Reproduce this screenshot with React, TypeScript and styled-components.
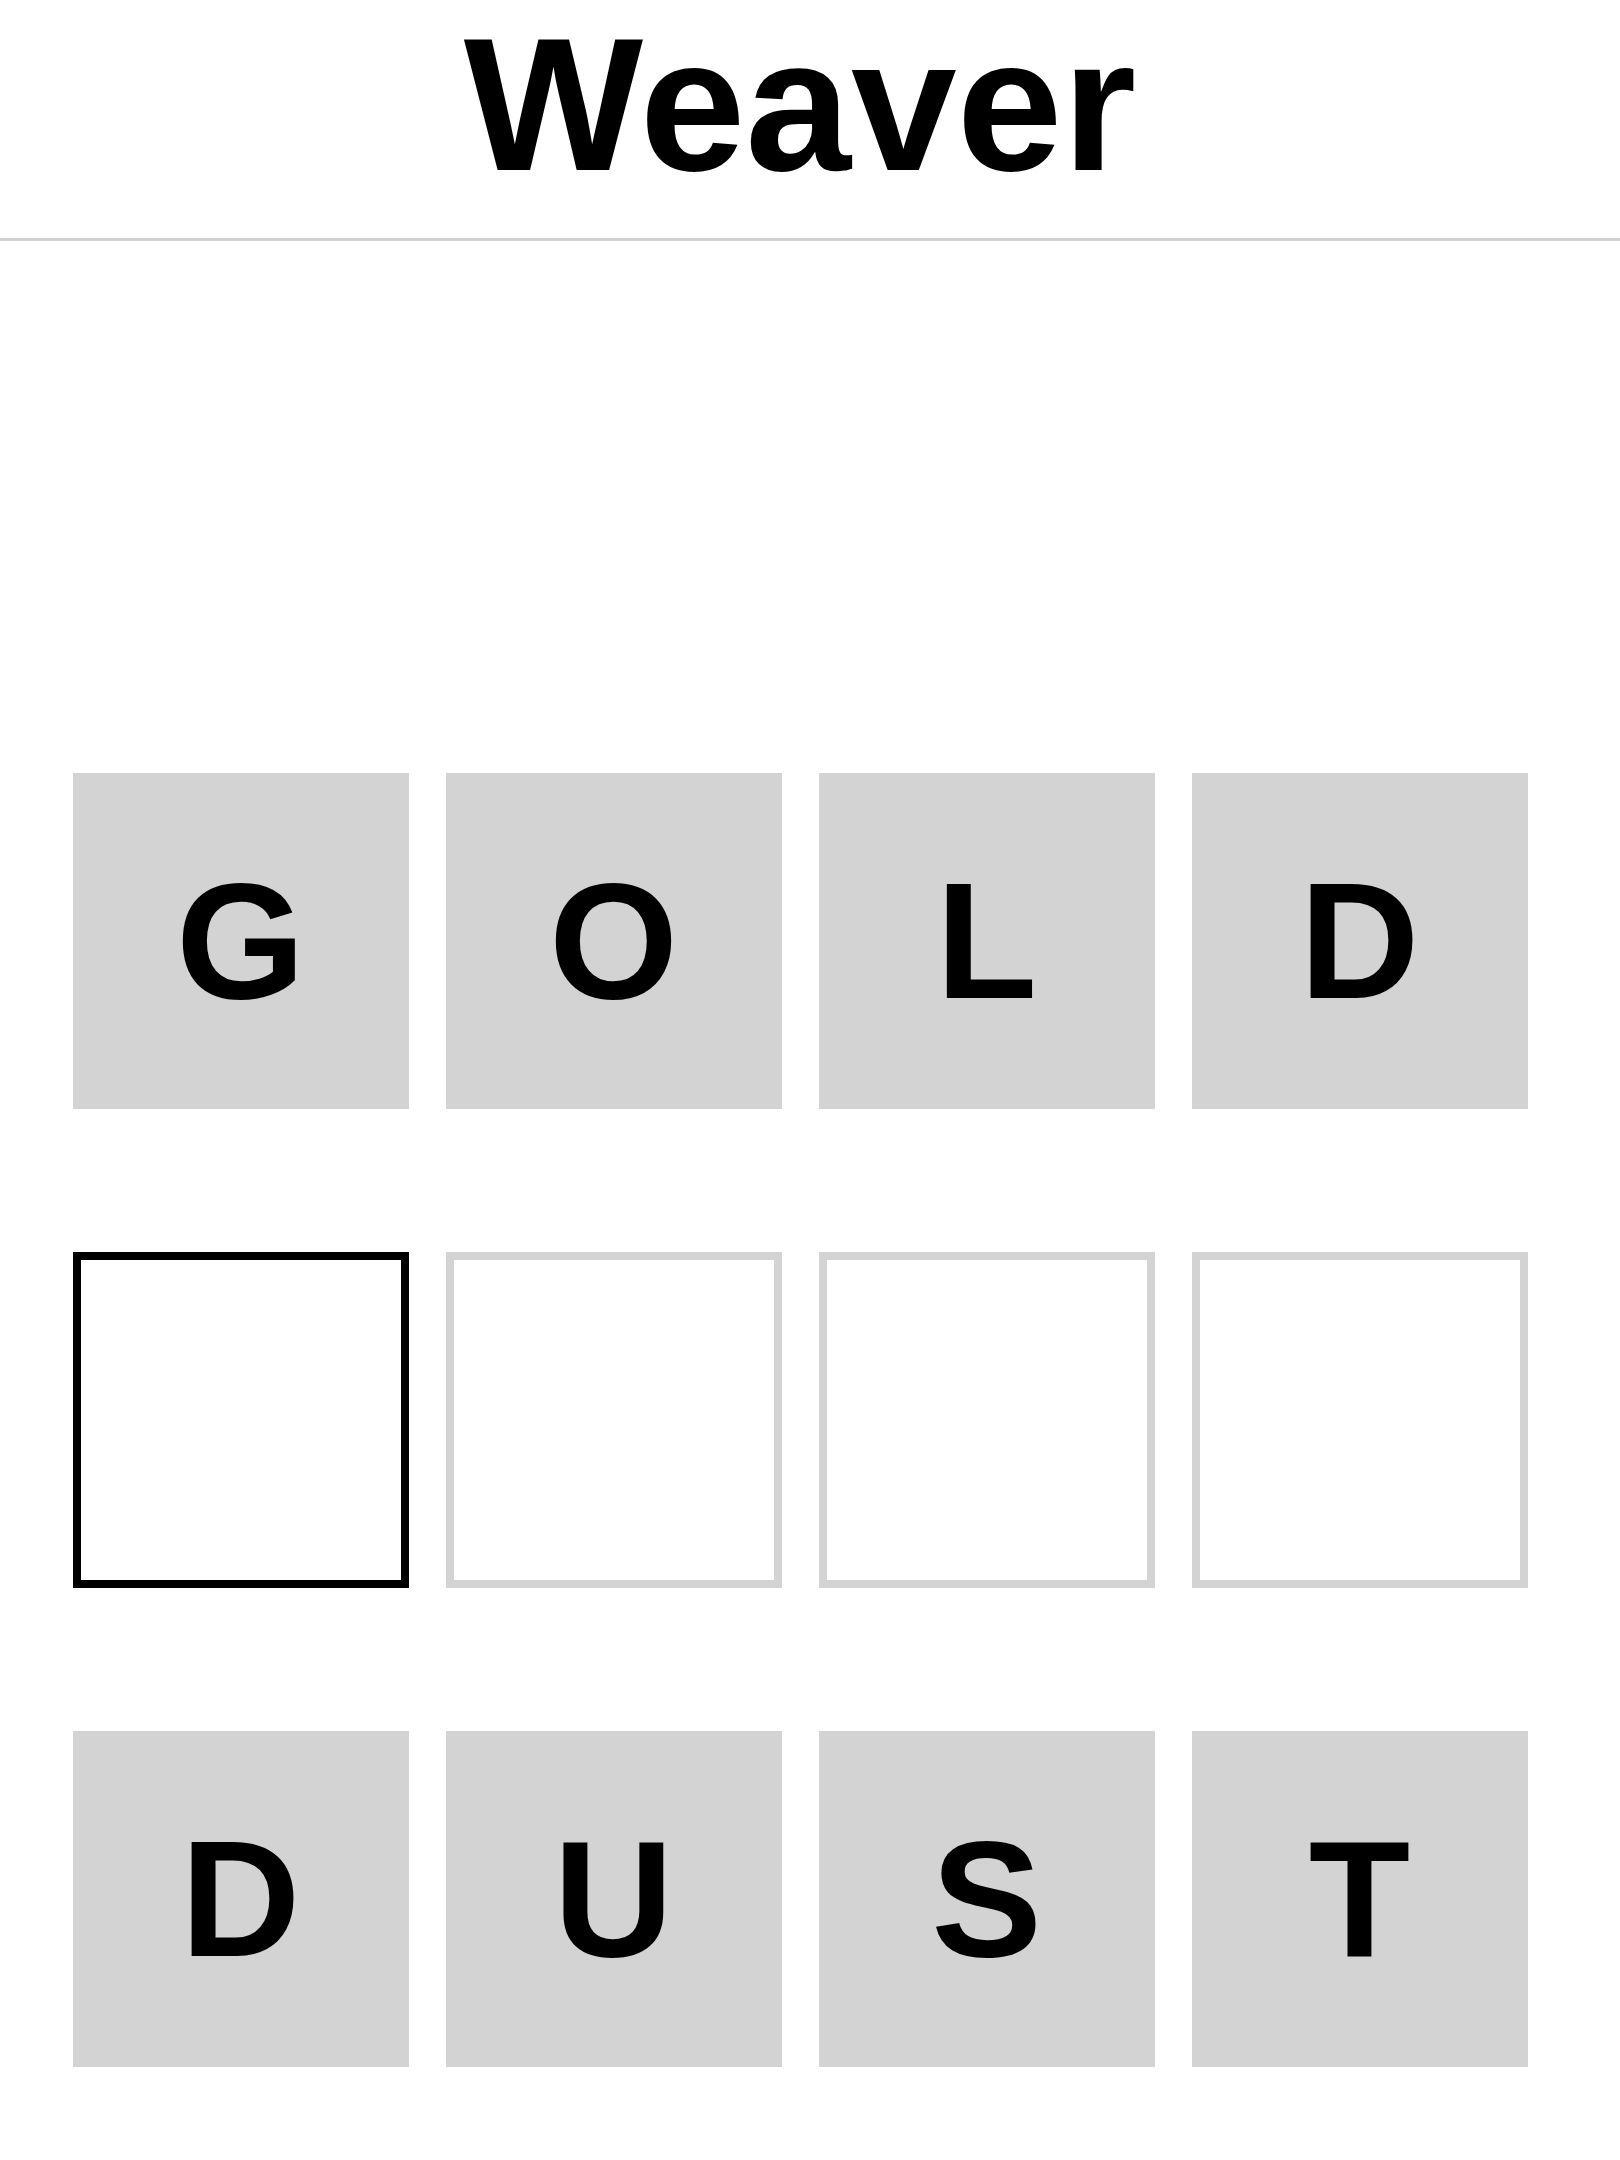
import styled, { createGlobalStyle } from "styled-components";

const GlobalStyle = createGlobalStyle`
  html, body {
    margin: 0;
    padding: 0;
    background: #fff;
  }

  body {
    font-family: "Liberation Sans", Arial, sans-serif;
    color: #000;
  }
`;

const Page = styled.div`
  width: 1620px;
  min-height: 2160px;
  display: flex;
  flex-direction: column;
`;

const Header = styled.header`
  display: flex;
  justify-content: center;
  padding: 0 20px 29px 0;
  border-bottom: 3px solid #d3d3d3;
`;

const Title = styled.h1`
  margin: 0;
  font-size: 190px;
  line-height: 1.1;
  font-weight: 700;
`;

const Board = styled.main`
  display: flex;
  flex-direction: column;
  align-items: center;
  gap: 143px;
  margin-top: 532px;
  padding-right: 20px;
`;

const Row = styled.div`
  display: flex;
  gap: 37px;
`;

type TileKind = "filled" | "empty" | "active";

const Tile = styled.div<{ $kind: TileKind }>`
  box-sizing: border-box;
  width: 336px;
  height: 336px;
  display: flex;
  align-items: center;
  justify-content: center;
  font-size: 166px;
  font-weight: 700;
  line-height: 1;
  background: ${(p) => (p.$kind === "filled" ? "#d3d3d3" : "#fff")};
  border: ${(p) =>
    p.$kind === "active"
      ? "8px solid #000"
      : p.$kind === "empty"
      ? "8px solid #d3d3d3"
      : "none"};
`;

const WordRow = ({ word }: { word: string }) => (
  <Row>
    {word.split("").map((ch, i) => (
      <Tile key={i} $kind="filled">
        {ch}
      </Tile>
    ))}
  </Row>
);

export default function App() {
  return (
    <>
      <GlobalStyle />
      <Page>
        <Header>
          <Title>Weaver</Title>
        </Header>
        <Board>
          <WordRow word="GOLD" />
          <Row>
            <Tile $kind="active" />
            <Tile $kind="empty" />
            <Tile $kind="empty" />
            <Tile $kind="empty" />
          </Row>
          <WordRow word="DUST" />
        </Board>
      </Page>
    </>
  );
}
